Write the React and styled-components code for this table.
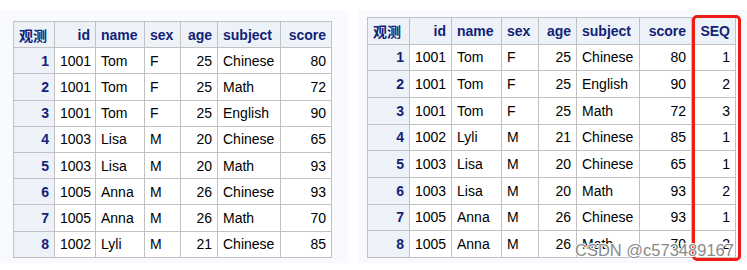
import React from "react";
import styled, { createGlobalStyle } from "styled-components";

const GlobalStyle = createGlobalStyle`
  body {
    margin: 0;
    background: #ffffff;
    font-family: Arial, "Liberation Sans", "Noto Sans CJK SC", sans-serif;
  }
`;

const Page = styled.div`
  position: relative;
  width: 747px;
  height: 270px;
  overflow: hidden;
  display: flex;
  gap: 10px;
  padding-top: 10px;
  box-sizing: border-box;
`;

const Panel = styled.div`
  position: relative;
  width: ${(p) => p.$width}px;
  height: 253px;
  background: #f9fafd;
  box-sizing: border-box;
  padding: ${(p) => p.$pad};
`;

const Table = styled.table`
  border-collapse: collapse;
  table-layout: fixed;
  font-size: 14px;
  color: #000000;
`;

const Th = styled.th`
  height: ${(p) => p.$h}px;
  padding: 0 5px;
  box-sizing: border-box;
  border: 1px solid #c1c1c1;
  background: #edf2f9;
  color: #112277;
  font-weight: bold;
  text-align: ${(p) => (p.$right ? "right" : "left")};
  white-space: nowrap;
`;

const Td = styled.td`
  height: ${(p) => p.$h}px;
  padding: 0 5px;
  box-sizing: border-box;
  border: 1px solid #c1c1c1;
  background: #ffffff;
  text-align: ${(p) => (p.$right ? "right" : "left")};
  white-space: nowrap;
`;

const Highlight = styled.div`
  position: absolute;
  left: 334px;
  top: 5px;
  width: 49px;
  height: 246px;
  border: 3px solid #ee1c14;
  border-radius: 5px;
  box-sizing: border-box;
`;

const Watermark = styled.div`
  position: absolute;
  left: 575px;
  top: 241px;
  font-family: Arial, "Liberation Sans", sans-serif;
  font-size: 16.5px;
  color: #8a8a8a;
  text-shadow: 1px 0 0 #fff, -1px 0 0 #fff, 0 1px 0 #fff, 0 -1px 0 #fff;
`;

const leftRows = [
  [1, 1001, "Tom", "F", 25, "Chinese", 80],
  [2, 1001, "Tom", "F", 25, "Math", 72],
  [3, 1001, "Tom", "F", 25, "English", 90],
  [4, 1003, "Lisa", "M", 20, "Chinese", 65],
  [5, 1003, "Lisa", "M", 20, "Math", 93],
  [6, 1005, "Anna", "M", 26, "Chinese", 93],
  [7, 1005, "Anna", "M", 26, "Math", 70],
  [8, 1002, "Lyli", "M", 21, "Chinese", 85],
];

const rightRows = [
  [1, 1001, "Tom", "F", 25, "Chinese", 80, 1],
  [2, 1001, "Tom", "F", 25, "English", 90, 2],
  [3, 1001, "Tom", "F", 25, "Math", 72, 3],
  [4, 1002, "Lyli", "M", 21, "Chinese", 85, 1],
  [5, 1003, "Lisa", "M", 20, "Chinese", 65, 1],
  [6, 1003, "Lisa", "M", 20, "Math", 93, 2],
  [7, 1005, "Anna", "M", 26, "Chinese", 93, 1],
  [8, 1005, "Anna", "M", 26, "Math", 70, 2],
];

const baseCols = [
  { label: "观测", right: false },
  { label: "id", right: true },
  { label: "name", right: false },
  { label: "sex", right: false },
  { label: "age", right: true },
  { label: "subject", right: false },
  { label: "score", right: true },
];

const DataTable = ({ cols, widths, rows, h }) => (
  <Table style={{ width: widths.reduce((a, b) => a + b, 0) + 1 }}>
    <colgroup>
      {widths.map((w, i) => (
        <col key={i} style={{ width: w }} />
      ))}
    </colgroup>
    <thead>
      <tr>
        {cols.map((c) => (
          <Th key={c.label} $h={h} $right={c.right}>
            {c.label}
          </Th>
        ))}
      </tr>
    </thead>
    <tbody>
      {rows.map((r) => (
        <tr key={r[0]}>
          {r.map((v, i) =>
            i === 0 ? (
              <Th key={i} $h={h} $right>
                {v}
              </Th>
            ) : (
              <Td key={i} $h={h} $right={cols[i].right}>
                {v}
              </Td>
            )
          )}
        </tr>
      ))}
    </tbody>
  </Table>
);

export default function App() {
  return (
    <>
      <GlobalStyle />
      <Page>
        <Panel $width={348} $pad="11px 0 0 13px">
          <DataTable
            cols={baseCols}
            widths={[41, 41, 49, 36, 37, 63, 51]}
            rows={leftRows}
            h={26.2}
          />
        </Panel>
        <Panel $width={389} $pad="7px 0 0 9px">
          <DataTable
            cols={[...baseCols, { label: "SEQ", right: true }]}
            widths={[42, 42, 50, 37, 38, 63, 52, 44]}
            rows={rightRows}
            h={26.67}
          />
          <Highlight />
        </Panel>
        <Watermark>CSDN @c573489167</Watermark>
      </Page>
    </>
  );
}
